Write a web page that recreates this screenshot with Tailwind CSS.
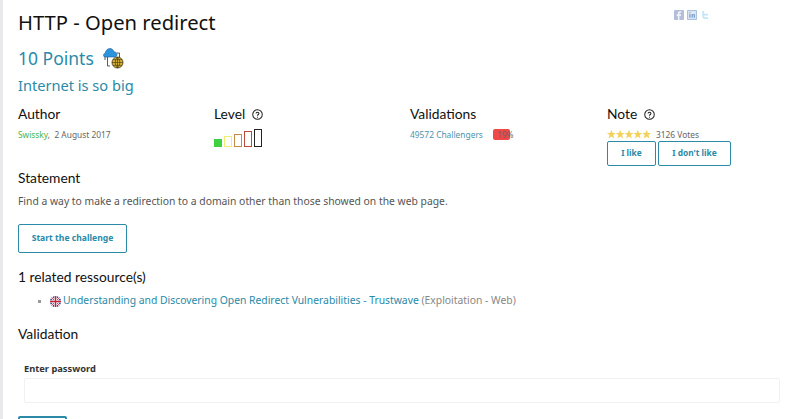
<!DOCTYPE html>
<html><head><meta charset="utf-8"><script src="https://cdn.jsdelivr.net/npm/@tailwindcss/browser@4"></script></head>
<body class="bg-white overflow-hidden font-['Noto_Sans','Open_Sans',sans-serif]">
<div class="w-[800px] h-[419px] overflow-hidden border-l-[3px] border-[#e9e9ec] pl-[15px] pr-[20px] relative text-[#111]">
  <div class="absolute left-[671px] top-[10px] flex gap-[3px]">
    <svg width="10" height="10" viewBox="0 0 11 11"><rect width="11" height="11" rx="1" fill="#b3bfd8"/><path d="M6 11V6.5H7.6L7.8 4.8H6V3.8C6 3.2 6.3 3 6.9 3H7.9V1.5H6.5C5 1.5 4.3 2.4 4.3 3.7V4.8H3V6.5H4.3V11Z" fill="#f2f4f9"/></svg>
    <svg width="10" height="10" viewBox="0 0 11 11"><rect width="11" height="11" rx="1" fill="#a9bfdf"/><rect x="1.2" y="1.2" width="8.6" height="8.6" fill="#dfe8f4"/><rect x="2.5" y="4.5" width="1.4" height="4" fill="#7f9fcb"/><rect x="2.5" y="2.5" width="1.4" height="1.3" fill="#7f9fcb"/><path d="M5 4.5H6.3V5.2C7.2 4 8.8 4.4 8.8 6V8.5H7.4V6.3C7.4 5.4 6.4 5.4 6.4 6.3V8.5H5Z" fill="#7f9fcb"/></svg>
    <svg width="10" height="10" viewBox="0 0 11 11"><path d="M2.5 1V6.5C2.5 8.5 3.8 10 5.8 10H9V8H6C5 8 4.6 7.4 4.6 6.6V6H8.8V4H4.6V1Z" fill="#c3e6f6"/></svg>
  </div>

  <h1 class="text-[20.2px] leading-[32px] pt-[6px] font-normal">HTTP - Open redirect</h1>
  <div class="flex items-center mt-[5px] h-[30px] text-[#2a8aa8]">
    <span class="text-[17.5px] leading-[30px]">10 Points</span>
    <svg class="ml-[8px]" width="22" height="22" viewBox="0 0 22 22">
      <path d="M3 10C1 10 1 6.5 3.2 6.2C3.6 3 6 1.5 8 1.5C10 1.5 11.5 3 12 5C14 4.6 15 6 15 7.3C15 9 14 10 13 10Z" fill="#2c93dd" stroke="#1e5f96" stroke-width=".6"/>
      <path d="M5.5 10V19H8M15 6H17.5V11M3 13V10" fill="none" stroke="#333" stroke-width=".8"/>
      <circle cx="15.5" cy="15.5" r="5.5" fill="#d9b23a" stroke="#3b3312" stroke-width=".8"/>
      <path d="M10 15.5H21M15.5 10V21M11 12.7H20M11 18.3H20M15.5 10C12.5 13 12.5 18 15.5 21C18.5 18 18.5 13 15.5 10Z" fill="none" stroke="#3b3312" stroke-width=".6"/>
    </svg>
  </div>
  <h2 class="text-[14.6px] leading-[24px] font-normal text-[#2a8aa8]">Internet is so big</h2>

  <div class="grid grid-cols-[196px_196px_197px_1fr] mt-[7px]">
    <div>
      <div class="font-['Lato'] text-[13.8px] leading-[20px] h-[20px]">Author</div>
      <div class="text-[8.4px] leading-[13px] mt-[4px] text-[#666]"><span class="text-[#4ab54a]">Swissky</span>,&nbsp; 2 August 2017</div>
    </div>
    <div>
      <div class="font-['Lato'] flex items-center gap-[7px] text-[13.8px] leading-[20px] h-[20px]">Level
        <svg width="11" height="11" viewBox="0 0 12 12" fill="none" stroke="#222" stroke-width="1.1"><circle cx="6" cy="6" r="5.2"/><path d="M4.4 4.8C4.4 3 7.6 3 7.6 4.8C7.6 6 6 6 6 7.4" /><path d="M6 8.4V9.4"/></svg>
      </div>
      <div class="flex items-end gap-[2px] mt-[3px] h-[20px]">
        <span class="w-[8px] h-[8px] bg-[#3fd13f]"></span>
        <span class="w-[8px] h-[11px] border border-[#f0ee70]"></span>
        <span class="w-[8px] h-[13px] border border-[#c48a48]"></span>
        <span class="w-[8px] h-[16px] border border-[#bb4a3a]"></span>
        <span class="w-[8px] h-[18px] border border-[#222]"></span>
      </div>
    </div>
    <div>
      <div class="font-['Lato'] text-[13.8px] leading-[20px] h-[20px]">Validations</div>
      <div class="flex items-center text-[8.4px] leading-[13px] mt-[4px]"><span class="text-[#4b94ad]">49572 Challengers</span>
        <span class="relative ml-[10px] w-[17px] h-[11px] bg-[#f04848] rounded-[2px] text-[#666] pl-[4px] leading-[11px] whitespace-nowrap">19%</span>
      </div>
    </div>
    <div>
      <div class="font-['Lato'] flex items-center gap-[7px] text-[13.8px] leading-[20px] h-[20px]">Note
        <svg width="11" height="11" viewBox="0 0 12 12" fill="none" stroke="#222" stroke-width="1.1"><circle cx="6" cy="6" r="5.2"/><path d="M4.4 4.8C4.4 3 7.6 3 7.6 4.8C7.6 6 6 6 6 7.4" /><path d="M6 8.4V9.4"/></svg>
      </div>
      <div class="flex items-center text-[8.4px] leading-[13px] mt-[4px] text-[#666]">
        <svg class="mr-[5px]" width="44" height="9" viewBox="0 0 44 9" fill="#f2d25a">
          <path d="M4.4 0L5.7 3H8.8L6.3 5L7.2 8.4L4.4 6.5L1.6 8.4L2.5 5L0 3H3.1Z"/>
          <path transform="translate(8.8 0)" d="M4.4 0L5.7 3H8.8L6.3 5L7.2 8.4L4.4 6.5L1.6 8.4L2.5 5L0 3H3.1Z"/>
          <path transform="translate(17.6 0)" d="M4.4 0L5.7 3H8.8L6.3 5L7.2 8.4L4.4 6.5L1.6 8.4L2.5 5L0 3H3.1Z"/>
          <path transform="translate(26.4 0)" d="M4.4 0L5.7 3H8.8L6.3 5L7.2 8.4L4.4 6.5L1.6 8.4L2.5 5L0 3H3.1Z"/>
          <path transform="translate(35.2 0)" d="M4.4 0L5.7 3H8.8L6.3 5L7.2 8.4L4.4 6.5L1.6 8.4L2.5 5L0 3H3.1Z"/>
        </svg>3126 Votes
      </div>
      <div class="flex gap-[2px] mt-[0px]">
        <button class="w-[49px] h-[25px] border border-[#2a8aa8] rounded-[2px] text-[8.4px] font-bold text-[#2a8aa8]">I like</button>
        <button class="w-[73px] h-[25px] border border-[#2a8aa8] rounded-[2px] text-[8.4px] font-bold text-[#2a8aa8]">I don't like</button>
      </div>
    </div>
  </div>

  <h3 class="font-['Lato'] text-[13.8px] leading-[20px] mt-[2px] font-normal">Statement</h3>
  <p class="text-[10.35px] leading-[16px] mt-[5px] text-[#555]">Find a way to make a redirection to a domain other than those showed on the web page.</p>
  <button class="block w-[109px] h-[29px] mt-[15px] border border-[#2a8aa8] rounded-[2px] text-[8.6px] font-bold text-[#2a8aa8]">Start the challenge</button>

  <h3 class="font-['Lato'] text-[13.8px] leading-[20px] mt-[14px] font-normal">1 related ressource(s)</h3>
  <ul class="mt-[6px] ml-[20px] flex items-center h-[16px] text-[10.35px] whitespace-nowrap">
    <span class="w-[3px] h-[3px] bg-[#999] mr-[9px]"></span>
    <svg class="mr-[2px]" width="11" height="11" viewBox="0 0 11 11"><defs><clipPath id="c"><circle cx="5.5" cy="5.5" r="5.5"/></clipPath></defs><g clip-path="url(#c)"><rect width="11" height="11" fill="#2b3a80"/><path d="M0 0L11 11M11 0L0 11" stroke="#fff" stroke-width="2"/><path d="M0 0L11 11M11 0L0 11" stroke="#c8233c" stroke-width=".8"/><path d="M5.5 0V11M0 5.5H11" stroke="#fff" stroke-width="2.6"/><path d="M5.5 0V11M0 5.5H11" stroke="#c8233c" stroke-width="1.4"/></g></svg>
    <li class="list-none"><span class="text-[#2a8aa8]">Understanding and Discovering Open Redirect Vulnerabilities - Trustwave</span> <span class="text-[#888]">(Exploitation - Web)</span></li>
  </ul>

  <h3 class="font-['Lato'] text-[13.8px] leading-[20px] mt-[15px] font-normal">Validation</h3>
  <label class="block text-[9.3px] leading-[13px] font-bold mt-[18px] ml-[6px] text-[#333]">Enter password</label>
  <input class="block w-[756px] h-[25px] mt-[3px] ml-[6px] border border-[#f1f1f1] rounded-[2px]" type="password">
  <button class="block w-[49px] h-[25px] mt-[13px] border-2 border-[#2a8aa8] rounded-[2px]"></button>
</div>
</body></html>
